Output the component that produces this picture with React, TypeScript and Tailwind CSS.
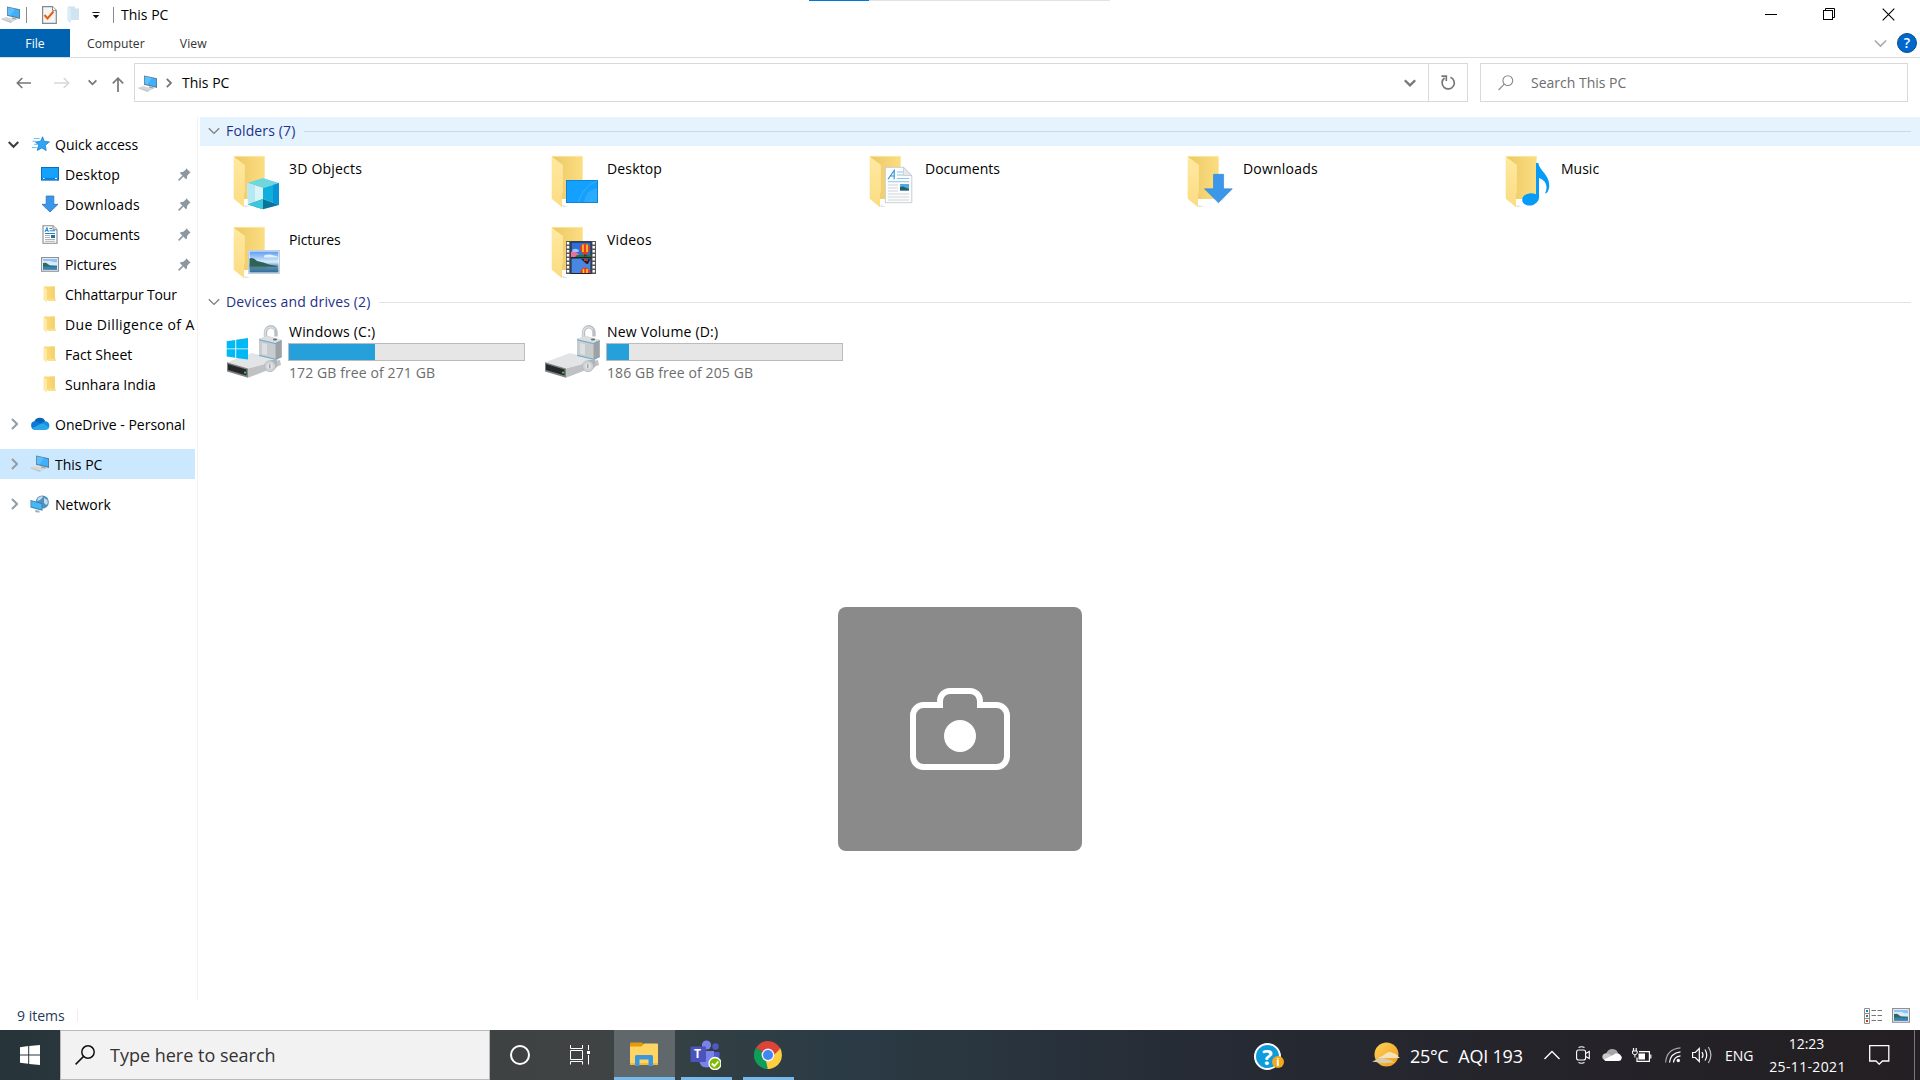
import type { ReactNode } from 'react';
import { clsx } from 'clsx';

/* ---------- Small icons ---------- */

function PcIcon({ className }: { className?: string }) {
  return (
    <svg width="20" height="18" viewBox="0 0 20 18" className={className}>
      <path d="M6 0.5L19 3.2V13L6 9.8Z" fill="#5f7f93" />
      <path d="M6.8 1.5L18 4V11.6L6.8 8.8Z" fill="#3fb0fb" />
      <path d="M6.8 1.5L14 3.1L9.5 9.5L6.8 8.8Z" fill="#5cc0ff" />
      <path d="M11 11.3L15.5 12.4V14L11 13Z" fill="#9aa9b3" />
      <path d="M0.5 12.4L5.5 11L15 13.8L10.3 16.4Z" fill="#d3d8db" />
      <path d="M0.5 12.4L10.3 15.4V17.2L0.5 13.6Z" fill="#c1c6c9" />
    </svg>
  );
}

function ChevronDown({ color = '#777', width = 1.5, size = 12 }: { color?: string; width?: number; size?: number }) {
  return (
    <svg width={size} height={size} viewBox="0 0 12 12" fill="none" stroke={color} strokeWidth={width}>
      <path d="M0.8 3.2L6 8.4L11.2 3.2" />
    </svg>
  );
}

function ChevronRight({ color = '#949da3' }: { color?: string }) {
  return (
    <svg width="7" height="12" viewBox="0 0 7 12" fill="none" stroke={color} strokeWidth="2">
      <path d="M1 1L6 6L1 11" />
    </svg>
  );
}

function StarIcon() {
  return (
    <svg width="18" height="16" viewBox="0 0 18 16">
      <path d="M10.6 0.8L12.2 5.3L17.4 5.9L13.3 9.2L14.2 14.6L9.9 11.9L5.2 14.4L6.6 9.2L3.6 6L8.6 5.3Z" fill="#2fa6f3" stroke="#1b7fd0" strokeWidth="0.8" />
      <path d="M2 2.5H7.5M0.5 5.3H4M2 8.3H5M0 11.5H4.5" stroke="#6bbcf2" />
    </svg>
  );
}

function DesktopIcon() {
  return (
    <svg width="18" height="14" viewBox="0 0 18 14">
      <rect x="0.5" y="0.5" width="17" height="12.6" fill="#16a2fc" stroke="#0b6fbe" />
      <path d="M1 11.7H17" stroke="#0b7cd0" strokeWidth="1.3" />
      <path d="M2 11.5H3.5M14 11.5H16" stroke="#fff" />
    </svg>
  );
}

function DownloadIcon() {
  return (
    <svg width="18" height="18" viewBox="0 0 18 18">
      <path d="M5.2 1H12.8V9.3H17L9 17L1 9.3H5.2Z" fill="#3a96ea" stroke="#2a76bf" strokeWidth="0.8" />
    </svg>
  );
}

function DocumentIcon() {
  return (
    <svg width="16" height="19" viewBox="0 0 16 19">
      <path d="M1 0.7H11L15 4.7V18.3H1Z" fill="#fff" stroke="#848a8e" strokeWidth="1.1" />
      <path d="M11 0.7V4.7H15" fill="#e5e8ea" stroke="#848a8e" />
      <path d="M3 7L5 2.5L6.3 7M3.5 5.5H6M7.5 3.5H10M7.5 5.8H13M3 8.5H13" stroke="#2386c9" fill="none" />
      <path d="M3 10.5H8M3 12.5H8M3 14.5H13M3 16.3H13" stroke="#9aa0a4" strokeWidth="0.8" />
      <rect x="9" y="10" width="4" height="3" fill="#2b6fa3" />
    </svg>
  );
}

function PictureIcon() {
  return (
    <svg width="18" height="15" viewBox="0 0 18 15">
      <rect x="0.6" y="0.6" width="16.8" height="13.6" fill="#fff" stroke="#8c9297" strokeWidth="1.2" />
      <rect x="2" y="2" width="14" height="10.8" fill="#8ec3f8" />
      <path d="M2 4H9L13 5.2H16V8H2Z" fill="#dcebf8" />
      <path d="M2 6L5 5.8L9 8.4L16 9V10H2Z" fill="#2f6a5c" />
      <rect x="2" y="9.6" width="14" height="3.2" fill="#3e7fb3" />
    </svg>
  );
}

function SmallFolder() {
  return (
    <svg width="13" height="17" viewBox="0 0 13 17">
      <path d="M1 0.5H12V14.2H3Z" fill="#f9d976" />
      <path d="M7 0.5H12V14.2H9Z" fill="#f4ce69" opacity="0.6" />
      <path d="M0.5 0.8L4 3.5V16.6L0.5 14Z" fill="#ffe9a6" />
      <path d="M4 12.8H12.8V15H5.5Z" fill="#fbe08a" />
    </svg>
  );
}

function OneDriveIcon() {
  return (
    <svg width="21" height="14" viewBox="0 0 21 14">
      <path d="M4.5 4.5A6.2 6.2 0 0 1 16 4L13 8L7 7Z" fill="#0364b8" />
      <path d="M5.5 12.8A4.3 4.3 0 0 1 5.4 4.2C7.5 4 9 5 10.5 6.2L14 9L8 12.8Z" fill="#0f78d4" />
      <path d="M9.5 7.5L15.4 4.2A4.4 4.4 0 0 1 20.4 8.5Q20.5 11 18.5 12.5L12 9Z" fill="#1490df" />
      <path d="M2 11.5L11 7Q13.5 6 16 7.8L20 10.8Q19 13.2 16.6 13.2H5Q3 13.2 2 11.5Z" fill="#28a8ea" />
    </svg>
  );
}

function NetworkIcon() {
  return (
    <svg width="20" height="19" viewBox="0 0 20 19">
      <circle cx="12.3" cy="7" r="6.6" fill="#5590bd" />
      <path d="M8 3Q12 0 13 2Q11 5 7 6ZM14 3L17.5 5Q18.5 8 16.5 10L14 8Z" fill="#c3dfef" />
      <path d="M0.5 5L12.5 8.2V15.8L0.5 12.6Z" fill="#3d7ea8" />
      <path d="M1.3 6.1L11.6 8.9V14.5L1.3 11.8Z" fill="#43b7f8" />
      <path d="M5.5 15L9.5 15.8V17.8L5 17Z" fill="#9fb0ba" />
    </svg>
  );
}

function PinIcon() {
  return (
    <svg width="13" height="13" viewBox="0 0 13 13">
      <path d="M8.3 0.3L12.7 4.7L11.4 5.2L9.2 7.8L8.9 10.5L8 11.2L1.8 5L2.7 4.2L5.3 3.8L7.9 1.6Z" fill="#8c98a1" />
      <path d="M5.2 7.8L0.6 12.4" stroke="#8c98a1" strokeWidth="1.6" />
    </svg>
  );
}

/* ---------- Large tile icons ---------- */

function FolderIcon({ children }: { children: ReactNode }) {
  return (
    <svg width="60" height="60" viewBox="0 0 60 60" className="shrink-0">
      <defs>
        <linearGradient id="folderBack" x1="0" y1="0" x2="1" y2="0">
          <stop offset="0" stopColor="#ecc763" />
          <stop offset="1" stopColor="#fbde82" />
        </linearGradient>
        <linearGradient id="folderFlap" x1="0" y1="0" x2="0" y2="1">
          <stop offset="0" stopColor="#ffe8a0" />
          <stop offset="1" stopColor="#fbdc82" />
        </linearGradient>
        <linearGradient id="lake" x1="0" y1="0" x2="0" y2="1">
          <stop offset="0" stopColor="#5d9cf5" />
          <stop offset="0.5" stopColor="#d8ecfb" />
          <stop offset="0.7" stopColor="#5f95b5" />
          <stop offset="1" stopColor="#2f6b9c" />
        </linearGradient>
      </defs>
      <path d="M20 53L26 54.5L21 55.3Z" fill="#e3e3e3" />
      <path d="M9.8 4H40.7V47H19Z" fill="url(#folderBack)" />
      <path d="M9.8 4.3H40.7" stroke="#fff0b8" strokeWidth="0.8" />
      <path d="M9.7 4.6L20.9 13V40L20 42V55.2L9.7 46.8Z" fill="url(#folderFlap)" />
      {children}
    </svg>
  );
}

const cube = (
  <>
    <path d="M39 26L55 31L39 36L23 31Z" fill="#6fd6e0" />
    <path d="M23 31L39 36V47L24 52.5Z" fill="#d9f4f8" />
    <path d="M23 31L31 33.5V50L24 52.5Z" fill="#b5e8f0" />
    <path d="M39 36L55 31V53L39 47Z" fill="#10b0dc" />
    <path d="M49 33L55 31V53L49 50.7Z" fill="#0a93d6" />
    <path d="M24 52.5L39 47L55 53L39 57.3Z" fill="#08749c" />
    <path d="M24 52.5L39 47V57.3Z" fill="#3ac9dc" />
  </>
);

const desktop = (
  <>
    <rect x="24.5" y="28.5" width="31" height="22" fill="#14a0ff" stroke="#1183cf" />
    <path d="M42 50Q44 38 55 36V50Z" fill="#2aabff" />
    <path d="M36 50Q42 34 55 29M48 50Q50 43 55 42" stroke="#38b0ff" fill="none" />
  </>
);

const documents = (
  <>
    <path d="M25.3 15.3H43.5L51.8 23.5V50.7H25.3Z" fill="#fbfcfd" stroke="#c5c9cc" strokeWidth="0.9" />
    <path d="M43.5 15.3V23.5H51.8Z" fill="#e6e9eb" stroke="#c5c9cc" strokeWidth="0.8" />
    <path d="M28 27.2L34.2 18.5V27.2M30.5 24H34.2" stroke="#2c8fd0" strokeWidth="1.1" fill="none" />
    <path d="M37 20H43M37 23H43M37 26.5H49M28 29.7H49" stroke="#8dc7e6" />
    <path d="M28 33H38M28 36H38M28 39H38M28 42H49M28 45H49M28 48H49" stroke="#d2d5d7" />
    <rect x="40" y="32" width="9" height="6.5" fill="#56a8de" />
    <path d="M40 35L43 34.5L49 37V38.5H40Z" fill="#225f6c" />
  </>
);

const downloads = (
  <path d="M35.5 22.3H45.6V36.8H54.3L40.5 50.8L26.4 36.8H35.5Z" fill="#3a97e9" stroke="#2f82cf" strokeWidth="0.6" />
);

const music = (
  <path
    d="M40 11H42.3C43.5 19 53.5 22.5 53.3 34Q53 39 50 41.6L49.2 41.2C52 35 50.5 28.5 43 26V45.5C43 49.5 38.5 53.6 33.6 53.6C29 53.6 26.2 51 26.2 48C26.2 43.5 30.8 41.2 35 41.2Q38 41.2 40 42.2Z"
    fill="#079bf8"
  />
);

const pictures = (
  <>
    <rect x="24.5" y="27.5" width="31" height="23" fill="#fff" stroke="#c3cfd9" />
    <rect x="25.5" y="28.5" width="29" height="21" fill="url(#lake)" />
    <path d="M40 32.5Q45 30.5 50 32.5Q54 33.5 54.5 34.5H40Z" fill="#e2f0fc" />
    <path d="M25.5 35.5Q29 34 33 38Q40 39 45 41.5L53 43V43.8H25.5Z" fill="#2f6256" />
    <path d="M25.5 43.8H46L38 46H25.5Z" fill="#4c8390" />
  </>
);

const videos = (
  <>
    <rect x="24" y="18" width="30" height="33" fill="#56565a" />
    <path d="M26 19V51M51.7 19V51" stroke="#fff" strokeWidth="2.4" strokeDasharray="2.4 1.6" />
    <rect x="28.5" y="18.5" width="21" height="32.5" fill="#1d2430" />
    <rect x="29.5" y="19.5" width="19" height="14" fill="#2f6ed8" />
    <rect x="29.5" y="35.5" width="19" height="14.5" fill="#4a86e4" />
    <path d="M29 29Q31 27 34 29L37 31.5V34H29Z" fill="#e8709a" />
    <path d="M35 32H49V34H33Z" fill="#1c7a3a" />
    <path d="M30 27Q33 25 36 26.5Q38 28 36 29H31Z" fill="#9cc6f7" />
    <path d="M38 25.5A5 5 0 0 1 48 25.5Q47.5 29 44.5 31.5H41.5Q38.5 29 38 25.5Z" fill="#e63d22" />
    <path d="M41 21.5V29M45 21.5V29" stroke="#f9d423" strokeWidth="1.5" />
    <path d="M42 31.5H44.5V33.5H42Z" fill="#5a2b12" />
    <path d="M39 36H48.5L46 41H44.5Z" fill="#29202f" />
    <path d="M42 37H46" stroke="#e63d22" strokeWidth="1.6" />
    <path d="M38 50Q39 44.5 43.2 44.5Q47.5 44.5 48.3 50Z" fill="#e63d22" />
    <path d="M41.5 46V50M45 46V50" stroke="#f9d423" strokeWidth="1.5" />
  </>
);

function DriveIcon({ windows }: { windows?: boolean }) {
  return (
    <svg width="60" height="60" viewBox="0 0 60 60" className="shrink-0">
      <path d="M3 40.3L28 31L56 38L24 46.5Z" fill="#e3e4e5" />
      <path d="M24 46.5L56 38L57 43L24 55.8Z" fill="#bfc1c3" />
      <path d="M3 40.3L24 46.5V55.8L3 49.6Z" fill="#7f8285" />
      <path d="M4 42L22.5 47.5V53.4L4 48Z" fill="#26282a" />
      <circle cx="21" cy="50.6" r="1.1" fill="#3fd24f" />
      {windows && (
        <path d="M2.7 19.2L11.3 18V26.4H2.7ZM12.2 17.8L24 16V26.4H12.2ZM2.7 27.3H11.3V35.8L2.7 34.6ZM12.2 27.3H24V37.4L12.2 36Z" fill="#00b8f4" />
      )}
      <path d="M41.5 18V10A5.3 6 0 0 1 52 10V14.5" fill="none" stroke="#b9bfc3" strokeWidth="3.4" />
      <path d="M41.2 17V10A5.3 6 0 0 1 51 8" fill="none" stroke="#dfe3e5" strokeWidth="1.2" />
      <path d="M35 16.8L44 14L57.7 18V35L52 38L35 34Z" fill="#c9ccce" />
      <path d="M35 16.8L44 14L57.7 18L51.5 21Z" fill="#dcdfe1" />
      <path d="M38 21L43 22V33L38 32Z" fill="#dddfe1" />
      <path d="M51.5 21L57.7 18V35L51.5 38Z" fill="#9ea2a5" />
      <path d="M35 17.8L51.5 21.6L57.7 19M35 33.4L51.5 37.2L57.7 34.6" fill="none" stroke="#6aaad0" />
      <ellipse cx="51" cy="17.5" rx="2.2" ry="1" fill="#696d70" />
      <path d="M46 38.5L53 37V45L47 49.5Z" fill="#b0b3b6" />
      <circle cx="46" cy="44.2" r="5.5" fill="#d0d3d5" stroke="#b3b6b9" strokeWidth="0.8" />
      <circle cx="46" cy="44.2" r="2.6" fill="#e4e6e7" />
      <path d="M45.8 42.2V46.3" stroke="#96999c" strokeWidth="1.3" />
    </svg>
  );
}

/* ---------- Data ---------- */

const quickAccess = [
  { label: 'Desktop', icon: <DesktopIcon />, pinned: true, tracking: 'tracking-[0.15px]' },
  { label: 'Downloads', icon: <DownloadIcon />, pinned: true, tracking: 'tracking-[0.2px]' },
  { label: 'Documents', icon: <DocumentIcon />, pinned: true },
  { label: 'Pictures', icon: <PictureIcon />, pinned: true, tracking: 'tracking-[-0.1px]' },
  { label: 'Chhattarpur Tour', icon: <SmallFolder />, tracking: 'tracking-[-0.15px]' },
  { label: 'Due Dilligence of A', icon: <SmallFolder />, tracking: 'tracking-[0.38px]' },
  { label: 'Fact Sheet', icon: <SmallFolder /> },
  { label: 'Sunhara India', icon: <SmallFolder /> },
];

const roots = [
  { label: 'OneDrive - Personal', icon: <OneDriveIcon /> },
  { label: 'This PC', icon: <PcIcon />, active: true },
  { label: 'Network', icon: <NetworkIcon /> },
];

const folders = [
  { label: '3D Objects', art: cube, tracking: 'tracking-[0.2px]' },
  { label: 'Desktop', art: desktop, tracking: 'tracking-[0.15px]' },
  { label: 'Documents', art: documents },
  { label: 'Downloads', art: downloads, tracking: 'tracking-[0.2px]' },
  { label: 'Music', art: music },
  { label: 'Pictures', art: pictures, tracking: 'tracking-[-0.1px]' },
  { label: 'Videos', art: videos, tracking: 'tracking-[0.25px]' },
];

const drives = [
  { label: 'Windows (C:)', free: 172, total: 271, windows: true },
  { label: 'New Volume (D:)', free: 186, total: 205 },
];

/* ---------- Sections ---------- */

function TitleBar() {
  return (
    <div className="flex h-[29px] items-center pl-px">
      <PcIcon className="mt-px" />
      <div className="ml-[5px] h-4 w-px bg-[#8a8a8a]" />
      <svg width="15" height="18" viewBox="0 0 15 18" className="ml-[15px]">
        <path d="M0.6 0.6H10.5L14.3 4.4V17.4H0.6Z" fill="#f5f5f5" stroke="#86888a" strokeWidth="1.2" />
        <path d="M10.5 0.6V4.4H14.3" fill="#fff" stroke="#86888a" />
        <path d="M2.5 9L5.5 12.5L11.5 5.5" fill="none" stroke="#ea5b0c" strokeWidth="2" />
      </svg>
      <svg width="13" height="18" viewBox="0 0 13 18" className="ml-[10px]">
        <path d="M1 0.5H8V2.5H12V14H3Z" fill="#cfe3f1" />
        <path d="M0.3 0.8L4 3.5V17.5L0.3 14.5Z" fill="#dcecf6" />
      </svg>
      <svg width="8" height="7" viewBox="0 0 8 7" className="ml-[12px] mt-[2px]">
        <path d="M0.5 0.5H7.5" stroke="#111" />
        <path d="M0.8 3H7.2L4 6.4Z" fill="#111" />
      </svg>
      <div className="ml-[13px] h-4 w-px bg-[#8a8a8a]" />
      <span className="ml-[7px]">This PC</span>
      <div className="ml-auto flex items-center">
        <svg width="12" height="12" viewBox="0 0 12 12" stroke="#000" className="mr-[46px]">
          <path d="M0 5.5H12" />
        </svg>
        <svg width="13" height="13" viewBox="0 0 13 13" fill="none" stroke="#000" className="mr-[46px]">
          <rect x="0.5" y="2.5" width="9" height="9" />
          <path d="M2.5 2.5V0.5H11.5V9.5H9.5" />
        </svg>
        <svg width="13" height="13" viewBox="0 0 13 13" stroke="#000" strokeWidth="1.1" className="mr-[25px]">
          <path d="M0.7 0.7L12.3 12.3M12.3 0.7L0.7 12.3" />
        </svg>
      </div>
    </div>
  );
}

function Ribbon() {
  return (
    <div className="flex h-[29px] items-center border-b border-[#dadbdc] text-[12.2px] text-[#333]">
      <div className="flex h-7 w-[70px] items-center justify-center bg-[#0063b1] pt-[2px] text-white">File</div>
      <span className="ml-[17px] mt-[2px] tracking-[0.05px]">Computer</span>
      <span className="ml-[35px] mt-[2px] tracking-[0.1px]">View</span>
      <div className="ml-auto flex items-center gap-[10px] pr-[3px]">
        <ChevronDown color="#aaa" size={13} />
        <div className="flex h-5 w-5 items-center justify-center rounded-full border border-[#0b4c8c] bg-[#0068cc] text-[14px] font-semibold text-white">
          ?
        </div>
      </div>
    </div>
  );
}

function AddressBar() {
  return (
    <div className="flex h-[59px] items-start pt-[5px]">
      <div className="flex h-[39px] w-[134px] shrink-0 items-center pl-[16px]">
        <svg width="16" height="12" viewBox="0 0 16 12" fill="none" stroke="#777" strokeWidth="1.6">
          <path d="M15 6H1.5M6.3 1L1.3 6L6.3 11" />
        </svg>
        <svg width="16" height="12" viewBox="0 0 16 12" fill="none" stroke="#d8d8d8" strokeWidth="1.6" className="ml-[22px]">
          <path d="M0 6H14.5M9.7 1L14.7 6L9.7 11" />
        </svg>
        <div className="ml-[18px]">
          <ChevronDown color="#777" width={2.4} size={9} />
        </div>
        <svg width="12" height="15" viewBox="0 0 12 15" fill="none" stroke="#777" strokeWidth="1.7" className="ml-[15px] mt-[3px]">
          <path d="M6 15V1.3M0.8 6.3L6 1.2L11.2 6.3" />
        </svg>
      </div>
      <div className="flex h-[39px] w-[1334px] shrink-0 items-center border border-[#d9d9d9] pl-[3px]">
        <PcIcon className="mt-[2px]" />
        <svg width="6" height="10" viewBox="0 0 6 10" fill="none" stroke="#777" strokeWidth="1.8" className="ml-[8px]">
          <path d="M0.8 0.8L5 5L0.8 9.2" />
        </svg>
        <span className="ml-[10px]">This PC</span>
        <div className="ml-auto flex h-full items-center">
          <ChevronDown color="#777" width={2.3} size={12} />
          <div className="ml-[12px] flex h-full w-[39px] items-center justify-center border-l border-[#d9d9d9]">
            <svg width="16" height="16" viewBox="0 0 16 16" fill="none" stroke="#777" strokeWidth="1.7">
              <path d="M10.5 2.2A6.1 6.1 0 1 1 4.5 3" />
              <path d="M1.5 1.2H6.3V6" />
            </svg>
          </div>
        </div>
      </div>
      <div className="ml-[12px] flex h-[39px] w-[428px] shrink-0 items-center border border-[#d9d9d9] pl-[17px] text-[#6d6d6d]">
        <svg width="16" height="16" viewBox="0 0 16 16" fill="none" stroke="#888" strokeWidth="1.1">
          <circle cx="9.8" cy="5.6" r="4.9" />
          <path d="M6.2 9.2L0.6 15" />
        </svg>
        <span className="ml-[17px]">Search This PC</span>
      </div>
    </div>
  );
}

function Sidebar() {
  return (
    <div className="h-[884px] w-[198px] shrink-0 border-r border-[#f3f3f3] pt-[12px]">
      <div className="flex h-[30px] items-center pl-[8px]">
        <ChevronDown color="#3c3c3c" width={2.2} size={11} />
        <div className="ml-[13px]">
          <StarIcon />
        </div>
        <span className="ml-[5px] mt-[2px]">Quick access</span>
      </div>
      {quickAccess.map((item) => (
        <div key={item.label} className="flex h-[30px] items-center pl-[40px] pr-[6px]">
          <div className="flex w-[19px] shrink-0 justify-center">{item.icon}</div>
          <span className={clsx('ml-[6px] mt-[2px] whitespace-nowrap', item.tracking)}>{item.label}</span>
          {item.pinned && (
            <div className="ml-auto">
              <PinIcon />
            </div>
          )}
        </div>
      ))}
      {roots.map((item) => (
        <div
          key={item.label}
          className={clsx('mt-[10px] flex h-[30px] w-[195px] items-center pl-[11px]', item.active && 'bg-[#cce8ff]')}
        >
          <ChevronRight />
          <div className="ml-[12px] flex w-[20px] justify-center">{item.icon}</div>
          <span className="ml-[5px] mt-[2px] whitespace-nowrap">{item.label}</span>
        </div>
      ))}
    </div>
  );
}

function GroupHeader({ label, highlighted }: { label: string; highlighted?: boolean }) {
  return (
    <div className={clsx('flex h-[29px] items-center pl-[8px] pr-[9px] text-[#1e3287]', highlighted && 'bg-[#e5f3ff]')}>
      <div className="-mt-px">
        <ChevronDown color="#7d7d7d" width={1.3} size={12} />
      </div>
      <span className="-mt-[2px] ml-[6px] tracking-[0.15px]">{label}</span>
      <div className={clsx('ml-[8px] h-px flex-1', highlighted ? 'bg-[#c8dae8]' : 'bg-[#e2e2e2]')} />
    </div>
  );
}

function Content() {
  return (
    <div className="ml-[2px] flex-1">
      <GroupHeader label="Folders (7)" highlighted />
      <div className="grid grid-cols-[repeat(5,318px)] pl-[24px] pt-[6px]">
        {folders.map((folder) => (
          <div key={folder.label} className="flex h-[71px]">
            <FolderIcon>{folder.art}</FolderIcon>
            <span className={clsx('ml-[5px] mt-[7px]', folder.tracking)}>{folder.label}</span>
          </div>
        ))}
      </div>
      <div className="-mt-[6px]">
        <GroupHeader label="Devices and drives (2)" />
      </div>
      <div className="flex pl-[24px] pt-[5px]">
        {drives.map((drive) => (
          <div key={drive.label} className="flex w-[318px]">
            <DriveIcon windows={drive.windows} />
            <div className="ml-[4px] w-[237px]">
              <div className="h-[21px] pl-px leading-[20px] tracking-[0.2px]">{drive.label}</div>
              <div className="h-[18px] border border-[#bcbcbc] bg-[#e6e6e6]">
                <div
                  className="h-full bg-[#26a0da]"
                  style={{ width: `${(1 - drive.free / drive.total) * 100}%` }}
                />
              </div>
              <div className="mt-[2px] pl-px leading-[20px] tracking-[0.1px] text-[#6d6d6d]">
                {drive.free} GB free of {drive.total} GB
              </div>
            </div>
          </div>
        ))}
      </div>
    </div>
  );
}

function StatusBar() {
  return (
    <div className="flex h-[29px] items-center pl-[17px] pr-[10px] text-[#1e395b]">
      <span>9 items</span>
      <div className="ml-[12px] h-[13px] w-px bg-[#efefef]" />
      <div className="ml-auto flex items-center gap-[10px]">
        <svg width="18" height="16" viewBox="0 0 18 16" fill="none">
          <path d="M0.5 0.5H5.5V15.5H0.5ZM0.5 5.5H5.5M0.5 10.5H5.5" stroke="#8e8e8e" />
          <path d="M7.5 2.5H12M13.5 2.5H18M7.5 7.5H12M13.5 7.5H18M7.5 12.5H12M13.5 12.5H18" stroke="#777" />
          <path d="M2 3H4" stroke="#2c7ac0" strokeWidth="2" />
          <path d="M2 8H4" stroke="#4a7a5e" strokeWidth="2" />
          <path d="M2 13H4" stroke="#d43a1a" strokeWidth="2" />
        </svg>
        <PictureIcon />
      </div>
    </div>
  );
}

function TaskButton({ width, underline, active, children }: { width: string; underline?: boolean; active?: boolean; children: ReactNode }) {
  return (
    <div className={clsx('flex h-full flex-col items-center', width, active && 'bg-[#61686c]')}>
      <div className="flex flex-1 items-center justify-center">{children}</div>
      {underline && <div className={clsx('-mt-[3px] h-[3px] bg-[#76b9ed]', active ? 'w-full' : 'w-[51px]')} />}
    </div>
  );
}

function Taskbar() {
  return (
    <div className="flex h-[50px] bg-[linear-gradient(90deg,#26343a_0px,#3f4243_490px,#3f4344_600px,#324044_700px,#2b3b45_840px,#262b35_1200px,#25242b_1500px,#231f22_1920px)] text-white">
      <TaskButton width="w-[60px]">
        <svg width="20" height="20" viewBox="0 0 20 20" fill="#fff">
          <path d="M0 2.2L8.2 1V9.4H0ZM9.2 0.9L20 0V9.4H9.2ZM0 10.4H8.2V18.8L0 17.7ZM9.2 10.4H20V20L9.2 19Z" />
        </svg>
      </TaskButton>
      <div className="flex w-[430px] items-center border border-[#b9b9b9] bg-[#f2f2f2] pl-[14px] text-[#333]">
        <svg width="20" height="20" viewBox="0 0 20 20" fill="none" stroke="#111" strokeWidth="1.5">
          <circle cx="13" cy="7" r="6.2" />
          <path d="M8.6 11.4L0.6 19.4" />
        </svg>
        <span className="ml-[15px] text-[18px]">Type here to search</span>
      </div>
      <TaskButton width="w-[60px]">
        <div className="h-5 w-5 rounded-full border-[2.6px] border-white" />
      </TaskButton>
      <TaskButton width="w-[64px]">
        <svg width="21" height="20" viewBox="0 0 21 20" fill="none" stroke="#fff" className="mr-[4px]">
          <path d="M0.5 0V3.5H12.5V0M0.5 5.5H12.5V14.5H0.5ZM0.5 19.5V16.5H12.5V19.5M18.5 0V5M18.5 10V19.5" />
          <rect x="17" y="6" width="3" height="3" fill="#fff" stroke="none" />
        </svg>
      </TaskButton>
      <TaskButton width="w-[61px]" underline active>
        <svg width="28" height="24" viewBox="0 0 28 24" className="-mt-[2px] mr-[2px]">
          <path d="M0 1.5Q0 0.5 1 0.5H12L14 3L12 5H0Z" fill="#e59a0c" />
          <path d="M0 4.5H11.5L14 1.5H27Q28 1.5 28 2.5V22Q28 23 27 23H1Q0 23 0 22Z" fill="#fed463" />
          <path d="M0 21H28V22Q28 23 27 23H1Q0 23 0 22Z" fill="#f4bb3a" />
          <path d="M5 24V14.5Q5 13 6.5 13H21.5Q23 13 23 14.5V24H18.5V17.5H9.5V24Z" fill="#3a96dd" />
        </svg>
      </TaskButton>
      <TaskButton width="w-[63px]" underline>
        <div className="relative -ml-[2px] h-[30px] w-[31px]">
          <svg width="31" height="30" viewBox="0 0 31 30">
            <circle cx="25.5" cy="6.5" r="3.2" fill="#5059c9" />
            <path d="M21 12H29.5V20Q29 25 23 25Z" fill="#5059c9" />
            <circle cx="16.5" cy="5" r="4.6" fill="#7b83eb" />
            <path d="M9 11H24V20Q23 27.5 16.5 27.5Q10 27.5 9 20Z" fill="#7b83eb" />
            <rect x="0.5" y="6.5" width="15.5" height="15.5" rx="1" fill="#4b53bc" />
            <circle cx="25" cy="23.5" r="6" fill="#7fba00" stroke="#fff" strokeWidth="1.3" />
            <path d="M21.8 23.5L24.3 26L28.3 21.5" fill="none" stroke="#fff" strokeWidth="1.8" />
          </svg>
          <span className="absolute left-[4px] top-[6px] text-[12px] font-bold leading-[16px]">T</span>
        </div>
      </TaskButton>
      <TaskButton width="w-[61px]" underline>
        <svg width="28" height="28" viewBox="0 0 28 28" className="mr-[2px]">
          <path d="M14 14L1.9 7A14 14 0 0 1 26.1 7Z" fill="#db4437" />
          <path d="M14 14L26.1 7A14 14 0 0 1 14 28Z" fill="#ffcd40" />
          <path d="M14 14L14 28A14 14 0 0 1 1.9 7Z" fill="#0f9d58" />
          <path d="M14 7.5H26.4L20 14Z" fill="#db4437" />
          <path d="M19.8 17.2L14 28L11.5 20Z" fill="#ffcd40" />
          <path d="M1.9 7L8.5 17.5L12 20L13.5 27.9A14 14 0 0 1 1.9 7Z" fill="#0f9d58" />
          <path d="M19.5 16.5L13.2 28H16Z" fill="#ffcd40" />
          <circle cx="14" cy="14" r="6.4" fill="#f1f1f1" />
          <circle cx="14" cy="14" r="5" fill="#4285f4" />
        </svg>
      </TaskButton>

      {/* System tray */}
      <div className="ml-auto flex h-full w-[666px] items-center">
        <div className="relative mt-[3px] h-[28px] w-[30px]">
          <div className="flex h-[27px] w-[27px] items-center justify-center rounded-full border-[2.5px] border-white bg-[#109bdc] text-[22px] font-bold leading-none">
            ?
          </div>
          <div className="absolute left-[18px] top-[13px] flex h-[12px] w-[12px] items-center justify-center rounded-full bg-[#f5a81c] text-[11px] font-bold leading-none">
            i
          </div>
        </div>
        <svg width="29" height="26" viewBox="0 0 29 26" className="ml-[88px]">
          <defs>
            <linearGradient id="sun" x1="0" y1="0" x2="1" y2="1">
              <stop offset="0" stopColor="#fdd25c" />
              <stop offset="1" stopColor="#f29a16" />
            </linearGradient>
          </defs>
          <circle cx="14.5" cy="12.5" r="12" fill="url(#sun)" />
          <path d="M8 15Q11 14 13 12Q17 8.5 21 11Q25 12 26 14.5L28 16H6Z" fill="#f3e3bd" />
          <path d="M0 19.5L5 17.5Q9 14.5 13 17Q19 17.5 23 20.5L10 21Z" fill="#d8cdb3" />
        </svg>
        <span className="ml-[9px] mt-[2px] text-[18px] tracking-[-0.35px]">25°C</span>
        <span className="ml-[10px] mt-[2px] text-[18px] tracking-[-0.2px]">AQI 193</span>
        <svg width="16" height="10" viewBox="0 0 16 10" fill="none" stroke="#fff" strokeWidth="1.3" className="ml-auto">
          <path d="M0.5 9L8 1.5L15.5 9" />
        </svg>
        <div className="flex h-full w-[360px] shrink-0 items-center pl-[16px]">
          <svg width="14" height="18" viewBox="0 0 14 18" fill="none" stroke="#fff" strokeWidth="1.1">
            <rect x="0.6" y="4" width="9" height="10" rx="2" />
            <path d="M9.6 7.5L13.3 5.5V12.5L9.6 10.5M2.5 1.5Q5.5 0 8.5 1.5M2.5 16.5Q5.5 18 8.5 16.5" />
          </svg>
          <svg width="20" height="14" viewBox="0 0 20 14" className="ml-[12px]">
            <path d="M4 6Q6 0.5 11 1Q15 1.5 16 5L11 9Z" fill="#a5a5a8" />
            <path d="M4.5 12.8Q0.3 12 0.3 8.8Q0.5 5.5 4.5 5.3Q7 5 10 8L6 12Z" fill="#c8c8ca" />
            <path d="M2 11.5L12 6.5Q15 4.2 18 6.5Q20 8.5 19.7 10.5Q19 13 16.5 13H4.5Q3 13 2 11.5Z" fill="#fff" />
          </svg>
          <svg width="20" height="15" viewBox="0 0 20 15" fill="none" stroke="#fff" strokeWidth="1.2" className="ml-[10px]">
            <path d="M7 3.6H17.4V13.4H5V9.5M18.8 6.5V10.5M1.5 0V3M4.2 0V3" />
            <path d="M0.5 3H5.2V5Q4.8 6.8 2.9 6.8Q1 6.8 0.5 5ZM2.9 6.8V9.5" strokeWidth="1" />
            <rect x="6.5" y="5.5" width="6.5" height="6" fill="#fff" stroke="none" />
          </svg>
          <svg width="16" height="16" viewBox="0 0 16 16" fill="none" stroke="#fff" strokeWidth="1.2" className="ml-[13px]">
            <path d="M0.6 15.5Q1.5 2 15.5 0.8" opacity="0.6" />
            <path d="M4.5 15.5Q5.5 6 15.5 4.8M8.5 15.5Q9 9.5 15.5 8.8" />
            <circle cx="13.3" cy="13.5" r="1.7" fill="#fff" stroke="none" />
          </svg>
          <svg width="21" height="18" viewBox="0 0 21 18" fill="none" stroke="#fff" strokeWidth="1.2" className="ml-[11px]">
            <path d="M0.6 6.5H3.3L7.3 2.5V15.5L3.3 11.5H0.6ZM10 6Q12 9 10 12M13 3.5Q16.5 9 13 14.5" />
            <path d="M16.3 1Q21.5 9 16.3 17" opacity="0.7" />
          </svg>
          <span className="ml-[12px] mt-px w-[29px] text-[14px]">ENG</span>
          <div className="ml-[15px] w-[77px] text-center text-[14px] leading-[23px]">
            <div className="-ml-[2px]">12:23</div>
            <div className="whitespace-nowrap tracking-[0.35px]">25-11-2021</div>
          </div>
          <svg width="21" height="20" viewBox="0 0 21 20" fill="none" stroke="#fff" strokeWidth="1.3" className="ml-[23px]">
            <path d="M0.7 0.7H19.8V16H13.5L10.2 19.2L7 16H0.7Z" />
          </svg>
          <div className="ml-auto mr-[5px] h-full w-px bg-[#77767a]" />
        </div>
      </div>
    </div>
  );
}

function CaptureOverlay() {
  return (
    <div className="absolute left-[838px] top-[607px] flex h-[244px] w-[244px] items-center justify-center rounded-[8px] bg-[#8a8a8a]">
      <svg width="100" height="82" viewBox="0 0 100 82" fill="none">
        <path
          d="M13.5 17H30V13A10 10 0 0 1 40 3H60A10 10 0 0 1 70 13V17H86.5A10.5 10.5 0 0 1 97 27.5V68.5A10.5 10.5 0 0 1 86.5 79H13.5A10.5 10.5 0 0 1 3 68.5V27.5A10.5 10.5 0 0 1 13.5 17Z"
          stroke="#fff"
          strokeWidth="6"
        />
        <circle cx="50" cy="48" r="16" fill="#fff" />
      </svg>
    </div>
  );
}

export default function App() {
  return (
    <div className="relative flex h-[1080px] w-[1920px] flex-col overflow-hidden bg-white font-['Open_Sans','Noto_Sans',sans-serif] text-[14px] leading-[20px] text-black">
      <TitleBar />
      <Ribbon />
      <AddressBar />
      <div className="flex h-[884px]">
        <Sidebar />
        <Content />
      </div>
      <StatusBar />
      <Taskbar />

      {/* Loading strip on the top edge */}
      <div className="absolute left-[809px] top-0 flex h-px w-[301px] bg-[#e3e3e3]">
        <div className="w-[60px] bg-[#0078d7]" />
      </div>
      <CaptureOverlay />
    </div>
  );
}
